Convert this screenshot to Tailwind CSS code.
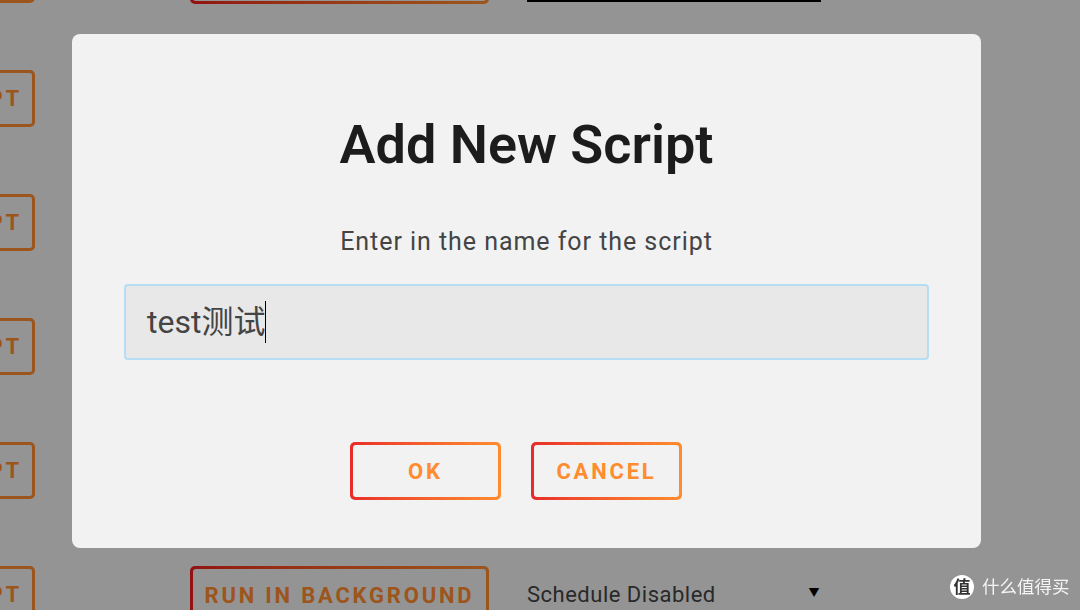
<!DOCTYPE html>
<html lang="en">
  <head>
    <meta charset="UTF-8" />
    <meta name="viewport" content="width=device-width, initial-scale=1.0" />
    <title>Add New Script</title>
    <script src="https://cdn.jsdelivr.net/npm/@tailwindcss/browser@4"></script>
  </head>
  <body class="w-[1080px] h-[610px] overflow-hidden bg-[#f2f2f2] font-['Roboto','Noto_Sans_CJK_SC',sans-serif]">
    <!-- Script list behind the dialog -->
    <main class="flex flex-col gap-[68px] -mt-[54px]">
      <div class="flex h-[56px]">
        <button class="w-[190px] -ml-[155px] h-[57px] border-[3px] border-[#ff8c2e] rounded-[5px] text-right pr-[10px] whitespace-nowrap text-[22px] font-bold tracking-[2.8px] text-[#ff8c2e]">RUN SCRIPT</button>
        <div class="ml-[155px] w-[299px] h-[58px] p-[3px] rounded-[5px] bg-gradient-to-r from-[#f01c1c] to-[#ff8c2e]">
          <div class="h-full rounded-[3px] bg-[#f2f2f2] flex items-center justify-center text-[22px] font-bold tracking-[2.8px] text-[#ff8c2e]">RUN IN BACKGROUND</div>
        </div>
        <div class="ml-[38px] w-[294px] h-[56px] border-b-2 border-black flex items-center justify-between pr-[1px] text-[22px] tracking-[0.5px] text-[#444]">
          <span>Schedule Disabled</span><span class="text-[11px] text-black">▼</span>
        </div>
      </div>
      <div class="flex h-[56px]">
        <button class="w-[190px] -ml-[155px] h-[57px] border-[3px] border-[#ff8c2e] rounded-[5px] text-right pr-[10px] whitespace-nowrap text-[22px] font-bold tracking-[2.8px] text-[#ff8c2e]">RUN SCRIPT</button>
      </div>
      <div class="flex h-[56px]">
        <button class="w-[190px] -ml-[155px] h-[57px] border-[3px] border-[#ff8c2e] rounded-[5px] text-right pr-[10px] whitespace-nowrap text-[22px] font-bold tracking-[2.8px] text-[#ff8c2e]">RUN SCRIPT</button>
      </div>
      <div class="flex h-[56px]">
        <button class="w-[190px] -ml-[155px] h-[57px] border-[3px] border-[#ff8c2e] rounded-[5px] text-right pr-[10px] whitespace-nowrap text-[22px] font-bold tracking-[2.8px] text-[#ff8c2e]">RUN SCRIPT</button>
      </div>
      <div class="flex h-[56px]">
        <button class="w-[190px] -ml-[155px] h-[57px] border-[3px] border-[#ff8c2e] rounded-[5px] text-right pr-[10px] whitespace-nowrap text-[22px] font-bold tracking-[2.8px] text-[#ff8c2e]">RUN SCRIPT</button>
      </div>
      <div class="flex h-[56px]">
        <button class="w-[190px] -ml-[155px] h-[57px] border-[3px] border-[#ff8c2e] rounded-[5px] text-right pr-[10px] whitespace-nowrap text-[22px] font-bold tracking-[2.8px] text-[#ff8c2e]">RUN SCRIPT</button>
        <div class="ml-[155px] w-[299px] h-[58px] p-[3px] rounded-[5px] bg-gradient-to-r from-[#f01c1c] to-[#ff8c2e]">
          <div class="h-full rounded-[3px] bg-[#f2f2f2] flex items-center justify-center text-[22px] font-bold tracking-[2.8px] text-[#ff8c2e]">RUN IN BACKGROUND</div>
        </div>
        <div class="ml-[38px] w-[294px] h-[56px] flex items-center justify-between pr-[1px] text-[22px] tracking-[0.5px] text-[#444]">
          <span>Schedule Disabled</span><span class="text-[11px] text-black">▼</span>
        </div>
      </div>
    </main>

    <!-- Dim overlay -->
    <div class="fixed inset-0 bg-black/39"></div>

    <!-- Dialog -->
    <div class="fixed left-[72px] top-[34px] w-[909px] h-[514px] rounded-[8px] bg-[#f2f2f2] flex flex-col items-center">
      <h1 class="mt-[80px] text-[54px] leading-[62px] font-semibold text-[#1c1c1c]">Add New Script</h1>
      <p class="mt-[51px] text-[25px] leading-[30px] tracking-[0.95px] text-[#444]">Enter in the name for the script</p>
      <div class="mt-[27px] w-[805px] h-[76px] border-2 border-[#b5def5] rounded-[4px] bg-[#e8e8e8] flex items-center pl-[21px] text-[32px] text-[#444]">
        <span>test测试</span><span class="w-[1px] h-[42px] bg-black"></span>
      </div>
      <div class="mt-[82px] flex gap-[30px] -ml-[21px]">
        <button class="w-[151px] h-[58px] p-[3px] rounded-[5px] bg-gradient-to-r from-[#e82a2a] to-[#ff8c2e]">
          <span class="h-full rounded-[3px] bg-[#f2f2f2] flex items-center justify-center text-[22px] font-bold tracking-[2.8px] text-[#ff8c2e]">OK</span>
        </button>
        <button class="w-[151px] h-[58px] p-[3px] rounded-[5px] bg-gradient-to-r from-[#e82a2a] to-[#ff8c2e]">
          <span class="h-full rounded-[3px] bg-[#f2f2f2] flex items-center justify-center text-[22px] font-bold tracking-[2.8px] text-[#ff8c2e]">CANCEL</span>
        </button>
      </div>
    </div>

    <!-- Watermark -->
    <div class="fixed left-[950px] top-[575px] flex items-center gap-[8px] whitespace-nowrap">
      <span class="w-[24px] h-[24px] rounded-full bg-white flex items-center justify-center text-[17px] leading-none font-bold text-[#333]">值</span>
      <span class="text-[17.5px] leading-[24px] text-[#f4f4f4]">什么值得买</span>
    </div>
  </body>
</html>
